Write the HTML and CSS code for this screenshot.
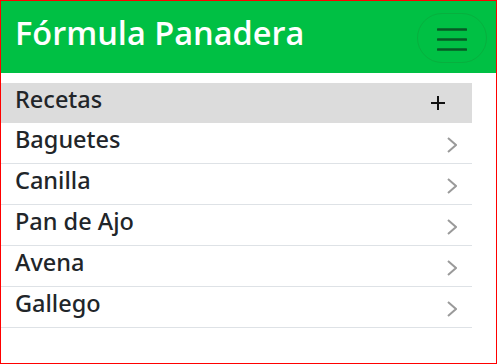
FILE: index.html
```html
<!DOCTYPE html>
<html lang="es">
<head>
<meta charset="utf-8">
<title>Fórmula Panadera</title>
<link rel="stylesheet" href="styles.css">
</head>
<body>
<div class="frame">
  <header class="bar">
    <h1 class="brand">Fórmula Panadera</h1>
    <button class="toggler" type="button" aria-label="Menú">
      <svg class="toggler-icon" viewBox="0 0 30 30" width="30" height="30">
        <path d="M1 6.5h28M1 16.5h28M1 26.5h28" stroke="#075a25" stroke-width="2.7" stroke-linecap="round" fill="none"/>
      </svg>
    </button>
  </header>
  <ul class="list">
    <li class="list-head">
      <span>Recetas</span>
      <svg class="plus" viewBox="0 0 14 14" width="14" height="14"><path d="M0 7h14M7 0v14" stroke="#111" stroke-width="2" fill="none"/></svg>
    </li>
    <li class="row"><span>Baguetes</span><svg class="chev" viewBox="0 0 10 16" width="10" height="16"><path d="M1 1l8 7-8 7" stroke="#9a9a9a" stroke-width="2" fill="none"/></svg></li>
    <li class="row"><span>Canilla</span><svg class="chev" viewBox="0 0 10 16" width="10" height="16"><path d="M1 1l8 7-8 7" stroke="#9a9a9a" stroke-width="2" fill="none"/></svg></li>
    <li class="row"><span>Pan de Ajo</span><svg class="chev" viewBox="0 0 10 16" width="10" height="16"><path d="M1 1l8 7-8 7" stroke="#9a9a9a" stroke-width="2" fill="none"/></svg></li>
    <li class="row"><span>Avena</span><svg class="chev" viewBox="0 0 10 16" width="10" height="16"><path d="M1 1l8 7-8 7" stroke="#9a9a9a" stroke-width="2" fill="none"/></svg></li>
    <li class="row"><span>Gallego</span><svg class="chev" viewBox="0 0 10 16" width="10" height="16"><path d="M1 1l8 7-8 7" stroke="#9a9a9a" stroke-width="2" fill="none"/></svg></li>
  </ul>
</div>
</body>
</html>
```
FILE: styles.css
```css
html, body {
  margin: 0;
  padding: 0;
  background: #fff;
}
.frame {
  box-sizing: border-box;
  width: 497px;
  height: 364px;
  border: 1px solid #ff0000;
  font-family: "Open Sans", "Noto Sans", sans-serif;
  color: #212529;
}
.bar {
  height: 72px;
  background: #00c044;
  display: flex;
  align-items: center;
  justify-content: space-between;
  padding: 0 9px 0 14px;
}
.brand {
  margin: 0;
  font-size: 32.5px;
  font-weight: 600;
  color: #fff;
  line-height: 1;
  padding-bottom: 7px;
}
.toggler {
  box-sizing: border-box;
  width: 70px;
  height: 50px;
  border: 1px solid #07b03e;
  border-radius: 25px;
  background: transparent;
  display: flex;
  align-items: center;
  justify-content: center;
  padding: 0;
  margin-top: 2px;
}
.toggler-icon {
  display: block;
}
.list {
  list-style: none;
  margin: 10px 0 0 0;
  padding: 0;
  width: 471px;
}
.list-head, .row {
  display: flex;
  align-items: center;
  justify-content: space-between;
  font-family: "Noto Sans", "Open Sans", sans-serif;
  font-size: 23.5px;
  font-weight: 500;
}
.list-head {
  height: 40px;
  background: #dcdcdc;
  padding: 0 27px 0 14px;
}
.row {
  height: 40px;
  border-bottom: 1px solid #dee2e6;
  padding: 0 15px 0 14px;
}
.list-head span, .row span {
  line-height: 1;
  padding-bottom: 7px;
}
.plus, .chev {
  display: block;
}
.chev {
  margin-top: 4px;
}
```
